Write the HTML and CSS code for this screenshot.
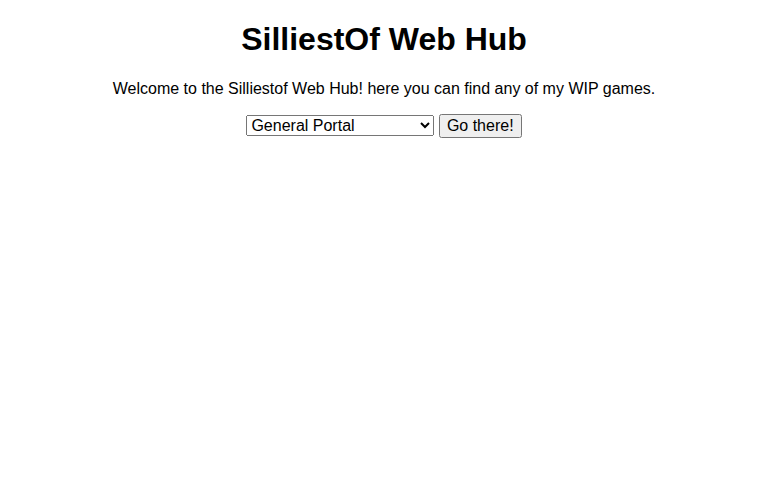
FILE: index.html
```html
<!DOCTYPE html>
<html lang="en">
<head>
    <meta charset="UTF-8">
    <meta name="viewport" content="width=device-width, initial-scale=1.0">
    <title>SilliestOf Web Hub</title>
    <link rel="stylesheet" href="styles.css">
</head>
<body>
    <h1>SilliestOf Web Hub</h1>
    <p>Welcome to the Silliestof Web Hub! here you can find any of my WIP games.</p>
    <div class="portal-picker">
        <select id="portal" class="portal-select">
            <option value="general">General Portal</option>
            <option value="games">Games Portal</option>
            <option value="experiments">Experiments</option>
        </select>
        <button class="go-button" type="button">Go there!</button>
    </div>
</body>
</html>
```

FILE: styles.css
```css
body {
    margin: 0;
    text-align: center;
    font-family: 'Liberation Sans', Arial, sans-serif;
    color: #000;
    background: #fff;
}

.portal-select,
.go-button {
    font-family: inherit;
    font-size: 16px;
}

.portal-select {
    width: 188px;
}
```
